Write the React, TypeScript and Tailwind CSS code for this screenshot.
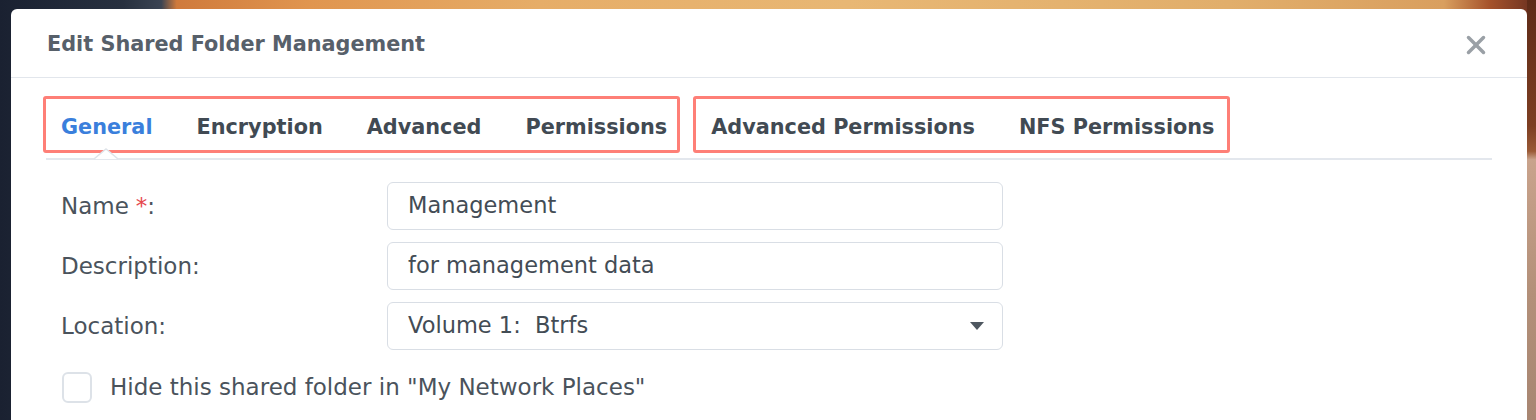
import { X } from "lucide-react";

const tabsLeft = ["General", "Encryption", "Advanced", "Permissions"];
const tabsRight = ["Advanced Permissions", "NFS Permissions"];

function Tab({ label, active }: { label: string; active?: boolean }) {
  return (
    <span className={active ? "text-[#3a7fdc]" : "text-[#414a53]"}>{label}</span>
  );
}

function Field({ value, select }: { value: string; select?: boolean }) {
  return (
    <div className="flex h-[48px] w-[616px] items-center justify-between rounded-[6px] border border-[#d9dee5] bg-white pl-[20px] pr-[18px] text-[22.5px] text-[#434c55]">
      <span className="whitespace-pre">{value}</span>
      {select && (
        <svg width="14" height="8" viewBox="0 0 14 8" className="text-[#4e5760]">
          <path d="M0 0h14L7 8z" fill="currentColor" />
        </svg>
      )}
    </div>
  );
}

export default function App() {
  return (
    <div className="h-[420px] w-full overflow-hidden bg-[#1d2534] bg-no-repeat bg-[image:linear-gradient(to_bottom,#5e2b18_0%,#7d3e22_30%,#9a5a36_36%,#c9a38c_38%,#b39079_70%,#a88672_100%),linear-gradient(to_right,#1a2131_0%,#27303f_8%,#3b4453_10.5%,#cf7a3c_11.5%,#e0954f_20%,#e6ad68_35%,#e8b774_55%,#e1ae6b_80%,#d99f5f_94%,#a5522b_97%,#6a3020_100%)] bg-[size:9px_100%,100%_100%] bg-[position:right_top,left_top] pl-[11px] pr-[9px] pt-[9px] font-['DejaVu_Sans',Verdana,sans-serif]">
      <div className="h-full rounded-t-[6px] bg-white">
        <div className="flex h-[69px] items-center justify-between border-b border-[#e2e6ec] pl-[36px] pr-[36px] pt-[3px]">
          <h1 className="text-[20.8px] font-bold text-[#57606a]">Edit Shared Folder Management</h1>
          <X className="h-[30px] w-[30px] text-[#9aa0a6]" strokeWidth={2.8} />
        </div>

        <div className="px-[35px]">
          <div className="relative mt-[18px] flex items-start border-b-2 border-[#e3e7ed] pb-[5px] text-[20.8px] font-bold">
            <div className="-ml-[3px] flex h-[57px] items-center gap-[44px] rounded-[3px] border-[3px] border-[#fe7f77] pl-[15px] pr-[10px] pt-[7px]">
              {tabsLeft.map((t, i) => (
                <Tab key={t} label={t} active={i === 0} />
              ))}
            </div>
            <div className="ml-[13px] flex h-[57px] items-center gap-[44px] rounded-[3px] border-[3px] border-[#fe7f77] pl-[15px] pr-[13px] pt-[7px]">
              {tabsRight.map((t) => (
                <Tab key={t} label={t} />
              ))}
            </div>
            <svg
              width="24"
              height="12"
              viewBox="0 0 24 12"
              className="absolute -bottom-[2px] left-[48px]"
            >
              <path d="M0 11 L12 1 L24 11 Z" fill="white" />
              <path d="M0 11 L12 1 L24 11" fill="none" stroke="#dfe4ea" strokeWidth="1.5" />
            </svg>
          </div>

          <div className="mt-[22px] grid grid-cols-[326px_auto] gap-y-[12px] pl-[15px] text-[23px] text-[#4a535c]">
            <div className="flex items-center">
              Name <span className="ml-[7px] text-[#e5484d]">*</span>:
            </div>
            <Field value="Management" />
            <div className="flex items-center">Description:</div>
            <Field value="for management data" />
            <div className="flex items-center">Location:</div>
            <Field value="Volume 1:  Btrfs" select />
          </div>

          <div className="mt-[20px] flex items-center gap-[18px] pl-[16px] text-[23px] text-[#4a535c]">
            <div className="h-[31px] w-[30px] rounded-[6px] border-2 border-[#dde2e8] bg-white" />
            <span>Hide this shared folder in "My Network Places"</span>
          </div>
        </div>
      </div>
    </div>
  );
}
